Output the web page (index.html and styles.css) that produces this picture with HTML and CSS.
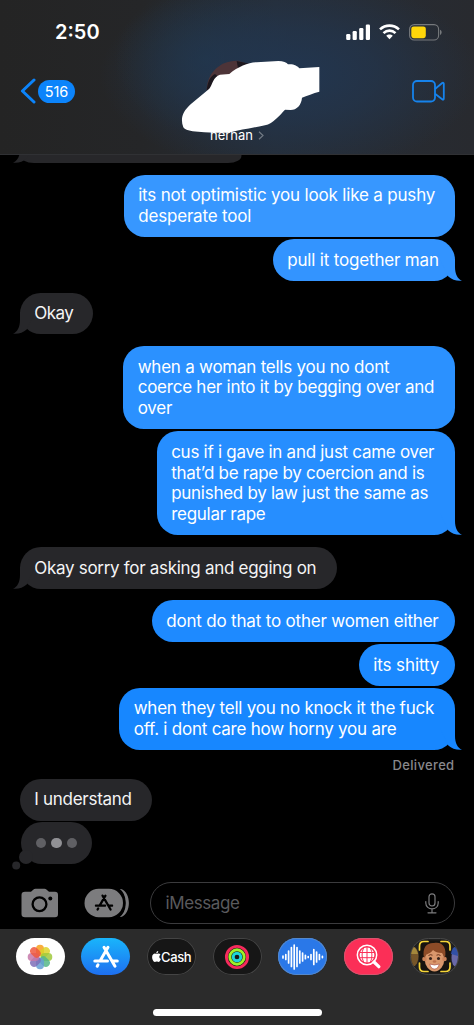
FILE: index.html
```html
<!DOCTYPE html>
<html lang="en">
<head>
  <meta charset="UTF-8">
  <meta name="viewport" content="width=device-width, initial-scale=1.0">
  <title>Messages</title>
  <link rel="stylesheet" href="styles.css">
</head>
<body>
  <svg class="defs" width="0" height="0">
    <symbol id="tail" viewBox="0 0 22 22">
      <path d="M0 0 H15 V8 C15 15 17.5 20 22 21.7 C17 22.3 12 21 8.3 17.6 Z"/>
    </symbol>
    <symbol id="store" viewBox="0 0 26 24">
      <path d="M11 2.2 L22 21.3 M15 2.2 L7 16 M1.8 16 H14.5 M20 16 H24.3 M5 19.8 L4.2 21.3"/>
    </symbol>
  </svg>

  <header class="header">
    <div class="status">
      <span class="time">2:50</span>
      <div class="status-icons">
        <svg width="25" height="16" viewBox="0 0 25 16" fill="#fff">
          <rect x="0.2" y="10" width="4.2" height="6" rx="1.2"/>
          <rect x="6.6" y="7" width="4.2" height="9" rx="1.2"/>
          <rect x="13.2" y="4" width="4.2" height="12" rx="1.2"/>
          <rect x="19.8" y="0.5" width="4.2" height="15.5" rx="1.2"/>
        </svg>
        <svg class="wifi" width="21" height="16" viewBox="0 0 21 16" fill="none" stroke="#fff" stroke-width="2.6">
          <path d="M1 5.4 C6.5 0.3 14.5 0.3 20 5.4"/>
          <path d="M4.5 9.1 C8 5.8 13 5.8 16.5 9.1"/>
          <path d="M7.2 11.8 C9 10 12 10 13.8 11.8 L10.5 15.2 Z" fill="#fff" stroke="none"/>
        </svg>
        <svg class="battery" width="33" height="17" viewBox="0 0 33 17">
          <rect x="0.6" y="0.6" width="29" height="15.4" rx="4.6" fill="none" stroke="#76797c" stroke-width="1.1"/>
          <rect x="2.3" y="2.4" width="14.5" height="11.8" rx="2.4" fill="#ffd60a"/>
          <path d="M31 5.7 C33.2 6.5 33.2 10.1 31 10.9 Z" fill="#76797c"/>
        </svg>
      </div>
    </div>
    <div class="nav">
      <div class="back">
        <svg width="16" height="26" viewBox="0 0 16 26"><path d="M14 2 L2.4 13 L14 24" fill="none" stroke="#0c84fb" stroke-width="3" stroke-linecap="round" stroke-linejoin="round"/></svg>
        <span class="unread">516</span>
      </div>
      <svg class="video" width="33" height="23" viewBox="0 0 33 23" fill="none" stroke="#1683ec" stroke-width="1.8" stroke-linejoin="round">
        <rect x="1" y="1" width="22" height="20.5" rx="4"/>
        <path d="M23 9 L30.2 3 C31 2.5 31.8 2.8 31.8 3.8 V18.5 C31.8 19.6 31 20 30.2 19.3 L23 13.8"/>
      </svg>
    </div>
    <div class="contact">hernan
      <svg width="6" height="9" viewBox="0 0 6 9"><path d="M1 0.8 L5 4.5 L1 8.2" fill="none" stroke="#717a84" stroke-width="1.2"/></svg>
    </div>
    <svg class="scribble" width="160" height="115" viewBox="0 0 480 345">
      <path d="M110 120 C110 75 145 30 205 32 L240 44 L180 90 Z" fill="#4d3438"/>
      <path d="M110 122 C113 95 120 80 135 72 L150 85 Z M200 33 L242 42 L205 60 Z" fill="#1c171e"/>
      <path d="M40 232 C30 205 38 185 62 163 L118 116 C128 102 130 80 150 74 L178 72 C205 50 235 38 260 37 L325 33 C340 33 350 38 354 43 C370 41 383 48 388 55 L448 51 V125 C430 130 410 137 396 143 C394 165 380 180 362 180 L345 179 C330 195 310 220 285 226 C240 235 210 240 185 246 C160 250 130 249 85 245 C60 244 45 240 40 232 Z" fill="#fff"/>
    </svg>
  </header>

  <main class="chat">
    <div class="bubble in cut"><svg class="tail"><use href="#tail"/></svg></div>
    <div class="bubble out c1 b1">its not optimistic you look like a pushy<br>desperate tool</div>
    <div class="bubble out c2 b2 last">pull it together man<svg class="tail"><use href="#tail"/></svg></div>
    <div class="bubble in b3 last">Okay<svg class="tail"><use href="#tail"/></svg></div>
    <div class="bubble out c3 b4">when a woman tells you no dont<br>coerce her into it by begging over and<br>over</div>
    <div class="bubble out c4 b5 last">cus if i gave in and just came over<br>that’d be rape by coercion and is<br>punished by law just the same as<br>regular rape<svg class="tail"><use href="#tail"/></svg></div>
    <div class="bubble in b6 last">Okay sorry for asking and egging on<svg class="tail"><use href="#tail"/></svg></div>
    <div class="bubble out c5 b7">dont do that to other women either</div>
    <div class="bubble out c6 b8">its shitty</div>
    <div class="bubble out c7 b9">when they tell you no knock it the fuck<br>off. i dont care how horny you are<svg class="tail"><use href="#tail"/></svg></div>
    <div class="delivered">Delivered</div>
    <div class="bubble in b10">I understand</div>
    <div class="bubble in typing">
      <i></i><i class="lit"></i><i></i>
      <svg class="puffs" width="24" height="20" viewBox="0 0 24 20" fill="#27272a"><circle cx="14" cy="7" r="7"/><circle cx="4.2" cy="15.6" r="4"/></svg>
    </div>
  </main>

  <div class="compose">
    <svg class="camera" width="38" height="30" viewBox="0 0 38 30">
      <path d="M4 3.8 H10 L12.5 1.5 Q13.2 0.8 14.5 0.8 H23.5 Q24.7 0.8 25.4 1.5 L28 3.8 H34 Q37 3.8 37 7 V26 Q37 29.2 34 29.2 H4 Q0.5 29.2 0.5 26 V7 Q0.5 3.8 4 3.8 Z" fill="#7c7c7e"/>
      <circle cx="18.5" cy="16.2" r="6.9" fill="none" stroke="#000" stroke-width="2.3"/>
      <circle cx="29.3" cy="10.6" r="2" fill="#000"/>
    </svg>
    <svg class="apps" width="45" height="30" viewBox="0 0 45 30">
      <rect x="0.5" y="0.8" width="38.5" height="28.4" rx="14.2" fill="#7c7c7e"/>
      <path d="M35 1.5 C43.5 7 43.5 23 35 28.5 L37 29 C47.5 26 47.5 4 37 1 Z" fill="#7c7c7e"/>
      <path d="M34.5 1 C43 7 43 23 34.5 29" fill="none" stroke="#000" stroke-width="1.6"/>
      <use href="#store" x="10.5" y="6" width="19" height="17.5" fill="none" stroke="#000" stroke-width="3.1" stroke-linecap="round"/>
    </svg>
    <div class="field">
      <span>iMessage</span>
      <svg width="14" height="21" viewBox="0 0 14 21" fill="none" stroke="#7c7c7e" stroke-width="1.2" stroke-linecap="round">
        <rect x="4" y="0.8" width="6" height="12.2" rx="3"/>
        <path d="M0.8 8.5 V10 C0.8 17.8 13.2 17.8 13.2 10 V8.5 M7 16 V19.7 M3 19.8 H11"/>
      </svg>
    </div>
  </div>

  <footer class="dock">
    <div class="drawer">
      <div class="app photos">
        <svg width="26" height="26" viewBox="-13 -13 26 26">
          <rect x="-4" y="-12.3" width="8" height="11.6" rx="4" fill="#f8a01c"/>
          <rect x="-4" y="-12.3" width="8" height="11.6" rx="4" fill="#dcd42a" transform="rotate(45)"/>
          <rect x="-4" y="-12.3" width="8" height="11.6" rx="4" fill="#a0c93d" transform="rotate(90)"/>
          <rect x="-4" y="-12.3" width="8" height="11.6" rx="4" fill="#55b788" transform="rotate(135)"/>
          <rect x="-4" y="-12.3" width="8" height="11.6" rx="4" fill="#659fd3" transform="rotate(180)"/>
          <rect x="-4" y="-12.3" width="8" height="11.6" rx="4" fill="#7e6eb8" transform="rotate(225)"/>
          <rect x="-4" y="-12.3" width="8" height="11.6" rx="4" fill="#c678a9" transform="rotate(270)"/>
          <rect x="-4" y="-12.3" width="8" height="11.6" rx="4" fill="#ef5840" transform="rotate(315)"/>
        </svg>
      </div>
      <div class="app appstore">
        <svg width="26" height="24" fill="none" stroke="#fff" stroke-width="3" stroke-linecap="round"><use href="#store"/></svg>
      </div>
      <div class="app cash">
        <svg width="9" height="11" viewBox="0 0 9 11" fill="#fff"><path d="M6.2 0 C6.3 1.4 5.4 2.5 4.2 2.5 C4.1 1.3 5.1 0.2 6.2 0 Z M4.5 3.1 C5.2 3 5.6 2.6 6.4 2.6 C7.3 2.6 8 3 8.5 3.7 C6.7 4.7 7 7.3 8.9 8 C8.2 9.7 7.4 11 6.4 11 C5.7 11 5.4 10.6 4.6 10.6 C3.8 10.6 3.5 11 2.8 11 C1.3 10.9 0.1 8.4 0.1 6.3 C0.1 3.9 1.6 2.6 3 2.6 C3.6 2.6 4 3 4.5 3.1 Z"/></svg>
        <span>Cash</span>
      </div>
      <div class="app fitness">
        <svg width="26" height="26" viewBox="0 0 26 26" fill="none" stroke-width="2.9">
          <circle cx="13" cy="13" r="10.6" stroke="#f52a5c"/>
          <circle cx="13" cy="13" r="7.2" stroke="#9cf02a"/>
          <circle cx="13" cy="13" r="3.8" stroke="#1ed5d8"/>
        </svg>
      </div>
      <div class="app audio">
        <svg width="42" height="26" viewBox="0 0 42 26" stroke="#fff" stroke-width="1.7" stroke-linecap="round">
          <path d="M1 12 V14 M3.8 10.5 V15.5 M6.6 7 V19 M9.4 3.5 V22.5 M12.2 1 V25 M15 3.5 V22.5 M17.8 7 V19 M20.6 9 V17 M23.4 11.3 V14.7 M26.2 12.5 V13.5 M29 10.5 V15.5 M31.8 5.5 V20.5 M34.6 8 V18 M37.4 10.5 V15.5 M40.4 12.4 V13.6"/>
        </svg>
      </div>
      <div class="app search">
        <svg width="25" height="25" viewBox="0 0 25 25" fill="none" stroke="#fff">
          <circle cx="11" cy="11" r="9.7" stroke-width="1.5"/>
          <circle cx="11" cy="11" r="7.4" fill="#fff" stroke="none"/>
          <path d="M11 3 V19 M3 8.5 H19 M3 13.7 H19 M7.5 4 C5.6 8 5.6 14 7.5 18 M14.5 4 C16.4 8 16.4 14 14.5 18" stroke="#fb2f57" stroke-width="1"/>
          <path d="M18 18 L22.8 22.7" stroke-width="3.2" stroke-linecap="round"/>
        </svg>
      </div>
      <div class="app memoji">
        <svg width="49" height="37" viewBox="0 0 49 37">
          <ellipse cx="3" cy="18.5" rx="5.5" ry="10" fill="#765629"/>
          <path d="M0 8 Q6 8 8 16 H0 Z" fill="#a4883b"/>
          <ellipse cx="46" cy="20" rx="4.5" ry="9" fill="#6968a6"/>
          <path d="M41 16 Q43 6 48 10 V18 Z" fill="#3150a5"/>
          <rect x="9" y="2.5" width="31.5" height="32" rx="5" fill="#17130f"/>
          <ellipse cx="24.5" cy="21" rx="9.8" ry="12.5" fill="#d9976c"/>
          <circle cx="14.5" cy="21" r="2.3" fill="#ca8259"/>
          <circle cx="34.5" cy="21" r="2.3" fill="#ca8259"/>
          <path d="M14 20 C12 9 17 4.5 24 5 C33 3.5 37 10 35 20 L32 15 C28 15 25 14 23 12 C21 15 17 16 16 17 Z" fill="#8d4b27"/>
          <circle cx="20.5" cy="20.5" r="1.5" fill="#35221a"/>
          <circle cx="28.5" cy="20.5" r="1.5" fill="#35221a"/>
          <path d="M18.5 17.5 Q20.5 16 22.5 17.2 M26.5 17.2 Q28.5 16 30.5 17.5" fill="none" stroke="#6b351d" stroke-width="1"/>
          <ellipse cx="24.5" cy="23.5" rx="1.8" ry="1.2" fill="#bd714c"/>
          <path d="M19.7 26 Q24.5 28 29.3 26 Q28 31 24.5 31 Q21 31 19.7 26 Z" fill="#fff" stroke="#a24640" stroke-width="0.6"/>
          <path d="M9.5 12 V8 Q9.5 3.5 14 3.5 H18 M31 3.5 H35.5 Q40 3.5 40 8 V12 M9.5 25 V29 Q9.5 33.5 14 33.5 H18 M31 33.5 H35.5 Q40 33.5 40 29 V25" fill="none" stroke="#f5d538" stroke-width="1.7" stroke-linecap="round"/>
        </svg>
      </div>
    </div>
    <div class="home"></div>
  </footer>
</body>
</html>
```
FILE: styles.css
```css
* {
  box-sizing: border-box;
}

body {
  margin: 0;
  width: 474px;
  height: 1025px;
  display: flex;
  flex-direction: column;
  overflow: hidden;
  background: #000;
  color: #fff;
  font-family: Inter, "Liberation Sans", sans-serif;
}

svg {
  display: block;
  flex: none;
}

.defs {
  position: absolute;
}

/* header */
.header {
  position: relative;
  flex: none;
  height: 155px;
  border-bottom: 1px solid #303134;
  background:
    radial-gradient(ellipse 190px 100px at 290px 75px, #223650 0%, rgba(34, 54, 80, 0.65) 45%, rgba(34, 54, 80, 0) 100%),
    radial-gradient(ellipse 90px 75px at 205px 60px, rgba(31, 57, 79, 0.65), rgba(31, 57, 79, 0)),
    linear-gradient(90deg, #242424 0%, #252628 30%, #262d36 58%, #282a2f 100%);
}

.status {
  display: flex;
  justify-content: space-between;
  align-items: center;
  height: 24px;
  margin-top: 20px;
  padding: 0 32px 0 55px;
}

.time {
  font-size: 20px;
  font-weight: 600;
  line-height: 24px;
}

.status-icons {
  display: flex;
  align-items: center;
}

.wifi {
  margin-left: 8px;
}

.battery {
  margin-left: 9px;
}

.nav {
  display: flex;
  justify-content: space-between;
  align-items: center;
  height: 26px;
  margin-top: 34px;
  padding: 0 29px 0 20px;
}

.back {
  display: flex;
  align-items: center;
  gap: 2px;
}

.unread {
  width: 37px;
  height: 23px;
  border-radius: 12px;
  background: #0c84fb;
  font-size: 14.5px;
  line-height: 23px;
  text-align: center;
}

.contact {
  display: flex;
  align-items: center;
  gap: 5px;
  margin: 23px 0 0 210px;
  font-size: 13px;
  line-height: 16px;
}

.scribble {
  position: absolute;
  left: 170px;
  top: 50px;
}

/* conversation */
.chat {
  flex: none;
  display: flex;
  flex-direction: column;
  height: 727px;
  padding: 0 19.5px;
}

.bubble {
  position: relative;
  flex: none;
  margin-bottom: 1.7px;
  padding: 10.6px 14.7px;
  border-radius: 21px;
  font-size: 17px;
  line-height: 20.75px;
  white-space: nowrap;
}

.out {
  align-self: flex-end;
}

.in {
  align-self: flex-start;
  background: #27272a;
  color: #f4f4f5;
  fill: #27272a;
}

.last {
  margin-bottom: 11.6px;
}

.tail {
  position: absolute;
  bottom: 0;
  right: -7px;
  width: 22px;
  height: 22px;
}

.in .tail {
  right: auto;
  left: -7px;
  transform: scaleX(-1);
}

.cut {
  width: 222px;
  height: 8px;
  margin-bottom: 11.6px;
  padding: 0;
  border-radius: 0 0 14px 14px / 0 0 8px 8px;
  clip-path: inset(0 0 0 -10px);
}

/* bubble widths */
.b1 { width: 331px; letter-spacing: -0.18px; }
.b2 { width: 182px; letter-spacing: -0.17px; }
.b3 { width: 73.5px; letter-spacing: -0.5px; }
.b4 { width: 331.5px; letter-spacing: -0.24px; }
.b5 { width: 298px; letter-spacing: -0.28px; }
.b6 { width: 317px; letter-spacing: -0.29px; }
.b7 { width: 303px; letter-spacing: -0.18px; }
.b8 { width: 96px; letter-spacing: -0.1px; }
.b9 { width: 335.5px; letter-spacing: -0.23px; }
.b10 { width: 132px; letter-spacing: -0.27px; }

/* sent bubbles get deeper down the thread */
.c1 { background: #3797ff; }
.c2 { background: #3394ff; fill: #3394ff; }
.c3 { background: #2b91ff; }
.c4 { background: #268eff; fill: #268eff; }
.c5 { background: #1e8aff; }
.c6 { background: #1b89ff; }
.c7 { background: #1787ff; fill: #1787ff; }

.delivered {
  align-self: flex-end;
  height: 26.5px;
  padding-top: 4.5px;
  color: #88888c;
  font-size: 13px;
  font-weight: 500;
  line-height: 16px;
  letter-spacing: 0.35px;
}

.typing {
  display: flex;
  align-items: center;
  gap: 5px;
  width: 71px;
  height: 42px;
  margin-left: 1.5px;
}

.typing i {
  width: 10.5px;
  height: 10.5px;
  border-radius: 50%;
  background: #606064;
  flex: none;
}

.typing .lit {
  background: #919195;
}

.puffs {
  position: absolute;
  left: -9px;
  bottom: -6px;
}

/* compose row */
.compose {
  flex: none;
  display: flex;
  align-items: center;
  height: 42px;
  padding: 0 19.5px 0 21px;
}

.apps {
  margin-left: 25px;
}

.field {
  flex: 1;
  display: flex;
  justify-content: space-between;
  align-items: center;
  height: 42px;
  margin-left: 20.5px;
  padding: 0 15px;
  border: 1px solid #3b3b3d;
  border-radius: 21px;
  color: #5a5a5d;
  font-size: 17px;
  letter-spacing: -0.4px;
}

/* app drawer */
.dock {
  flex: none;
  height: 96px;
  margin-top: 5px;
  background: #2b2b2b;
}

.drawer {
  display: flex;
  gap: 16.7px;
  padding: 9px 0 0 15.5px;
}

.app {
  flex: none;
  display: flex;
  align-items: center;
  justify-content: center;
  width: 49px;
  height: 37px;
  border-radius: 18.5px;
  overflow: hidden;
}

.photos {
  background: #fff;
}

.photos rect {
  opacity: 0.85;
}

.appstore {
  background: linear-gradient(#19b5fb, #1e6ff0);
}

.cash,
.fitness {
  background: #161616;
  box-shadow: inset 0 0 0 1px #444;
}

.cash {
  gap: 0.5px;
  font-size: 13px;
  font-weight: 500;
  letter-spacing: -0.4px;
}

.audio {
  background: #2a78e8;
  box-shadow: inset 0 0 0 1px #5589cc;
}

.search {
  background: #fb2f57;
  box-shadow: inset 0 0 0 1px #d65670;
}

.memoji {
  border: 1px solid #484848;
  background: #202020;
}

.home {
  width: 169px;
  height: 6.5px;
  margin: 34px 0 0 153px;
  border-radius: 4px;
  background: #fff;
}
```
